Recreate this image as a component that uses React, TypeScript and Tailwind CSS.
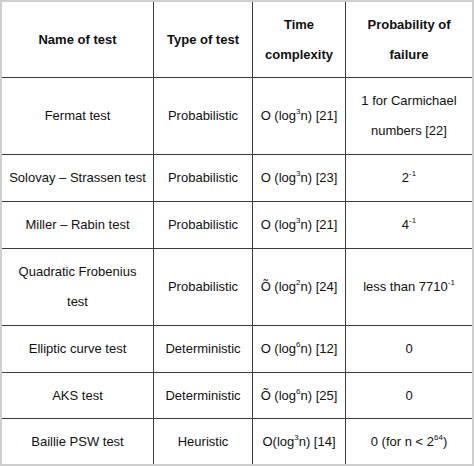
const Sup = ({ children }: { children: React.ReactNode }) => (
  <sup className="text-[8px] -top-[0.7em]">{children}</sup>
);

const Cell = ({
  children,
  last,
  bottom,
  bold,
}: {
  children: React.ReactNode;
  last?: boolean;
  bottom?: boolean;
  bold?: boolean;
}) => (
  <div
    className={`flex items-center justify-center text-center leading-[30px] px-1 border-[#3c3c3c] ${
      last ? "" : "border-r"
    } ${bottom ? "" : "border-b"} ${bold ? "font-bold" : ""}`}
  >
    <div>{children}</div>
  </div>
);

export default function App() {
  const data: React.ReactNode[][] = [
    [
      "Name of test",
      "Type of test",
      <>Time<br />complexity</>,
      <>Probability of<br />failure</>,
    ],
    [
      "Fermat test",
      "Probabilistic",
      <>O (log<Sup>3</Sup>n) [21]</>,
      <>1 for Carmichael<br />numbers [22]</>,
    ],
    [
      "Solovay – Strassen test",
      "Probabilistic",
      <>O (log<Sup>3</Sup>n) [23]</>,
      <>2<Sup>-1</Sup></>,
    ],
    [
      "Miller – Rabin test",
      "Probabilistic",
      <>O (log<Sup>3</Sup>n) [21]</>,
      <>4<Sup>-1</Sup></>,
    ],
    [
      <>Quadratic Frobenius<br />test</>,
      "Probabilistic",
      <>Õ (log<Sup>2</Sup>n) [24]</>,
      <>less than 7710<Sup>-1</Sup></>,
    ],
    [
      "Elliptic curve test",
      "Deterministic",
      <>O (log<Sup>6</Sup>n) [12]</>,
      "0",
    ],
    [
      "AKS test",
      "Deterministic",
      <>Õ (log<Sup>6</Sup>n) [25]</>,
      "0",
    ],
    [
      "Baillie PSW test",
      "Heuristic",
      <>O(log<Sup>3</Sup>n) [14]</>,
      <>0 (for n &lt; 2<Sup>64</Sup>)</>,
    ],
  ];

  return (
    <div className="w-[474px] h-[466px] bg-[#cfcfcf] p-[2px]">
      <div
        className="w-[470px] h-[462px] bg-white grid grid-cols-[152px_99px_93px_126px] grid-rows-[76px_77px_47px_47px_77px_47px_46px_45px] text-[13px] text-[#111]"
        style={{ fontFamily: '"Liberation Sans", Arial, sans-serif' }}
      >
        {data.map((row, ri) =>
          row.map((c, ci) => (
            <Cell
              key={`${ri}-${ci}`}
              last={ci === 3}
              bottom={ri === data.length - 1}
              bold={ri === 0}
            >
              {c}
            </Cell>
          ))
        )}
      </div>
    </div>
  );
}
